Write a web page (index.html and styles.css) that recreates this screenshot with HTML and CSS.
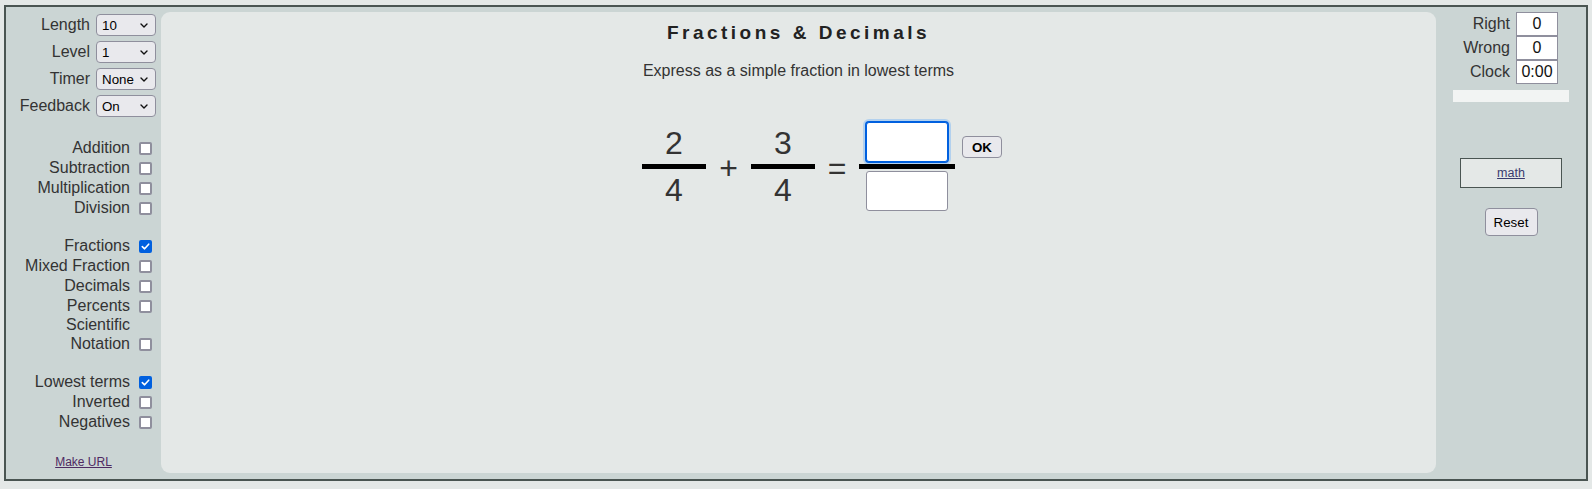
FILE: index.html
```html
<!DOCTYPE html>
<html lang="en">
<head>
<meta charset="utf-8">
<title>Fractions &amp; Decimals</title>
<link rel="stylesheet" href="styles.css">
</head>
<body>
<div class="frame">
  <aside class="left">
    <div class="settings">
      <label class="set-label">Length</label>
      <select class="sel"><option>10</option></select>
      <label class="set-label">Level</label>
      <select class="sel"><option>1</option></select>
      <label class="set-label">Timer</label>
      <select class="sel"><option>None</option></select>
      <label class="set-label">Feedback</label>
      <select class="sel"><option>On</option></select>
    </div>
    <div class="opts">
      <div class="group">
        <label class="opt"><span class="opt-text">Addition</span><input type="checkbox" class="cb"></label>
        <label class="opt"><span class="opt-text">Subtraction</span><input type="checkbox" class="cb"></label>
        <label class="opt"><span class="opt-text">Multiplication</span><input type="checkbox" class="cb"></label>
        <label class="opt"><span class="opt-text">Division</span><input type="checkbox" class="cb"></label>
      </div>
      <div class="group">
        <label class="opt"><span class="opt-text">Fractions</span><input type="checkbox" class="cb" checked></label>
        <label class="opt"><span class="opt-text">Mixed Fraction</span><input type="checkbox" class="cb"></label>
        <label class="opt"><span class="opt-text">Decimals</span><input type="checkbox" class="cb"></label>
        <label class="opt"><span class="opt-text">Percents</span><input type="checkbox" class="cb"></label>
        <div class="opt-wrap">Scientific</div>
        <label class="opt"><span class="opt-text">Notation</span><input type="checkbox" class="cb"></label>
      </div>
      <div class="group">
        <label class="opt"><span class="opt-text">Lowest terms</span><input type="checkbox" class="cb" checked></label>
        <label class="opt"><span class="opt-text">Inverted</span><input type="checkbox" class="cb"></label>
        <label class="opt"><span class="opt-text">Negatives</span><input type="checkbox" class="cb"></label>
      </div>
    </div>
    <div class="make-url"><a href="#">Make URL</a></div>
  </aside>

  <main class="panel">
    <h1 class="title">Fractions &amp; Decimals</h1>
    <p class="subtitle">Express as a simple fraction in lowest terms</p>
    <div class="equation-row">
      <div class="equation">
        <div class="frac">
          <div class="num">2</div>
          <div class="bar"></div>
          <div class="den">4</div>
        </div>
        <div class="op">+</div>
        <div class="frac">
          <div class="num">3</div>
          <div class="bar"></div>
          <div class="den">4</div>
        </div>
        <div class="op op-eq">=</div>
        <div class="frac answer">
          <input type="text" class="ans-in ans-top">
          <div class="bar"></div>
          <input type="text" class="ans-in ans-bottom">
        </div>
      </div>
      <button class="ok" type="button">OK</button>
    </div>
  </main>

  <aside class="right">
    <div class="stats">
      <span class="stat-label">Right</span><span class="stat-box">0</span>
      <span class="stat-label">Wrong</span><span class="stat-box">0</span>
      <span class="stat-label">Clock</span><span class="stat-box">0:00</span>
    </div>
    <div class="progress"></div>
    <div class="topic"><a href="#">math</a></div>
    <button class="reset" type="button">Reset</button>
  </aside>
</div>
</body>
</html>
```

FILE: styles.css
```css
* {
  box-sizing: border-box;
}

html,
body {
  margin: 0;
  padding: 0;
  background: #e4e8e7;
}

body {
  width: 1592px;
  height: 489px;
  overflow: hidden;
  font-family: "Liberation Sans", Arial, sans-serif;
  color: #333;
}

.frame {
  margin: 5px 0 0 4px;
  width: 1584px;
  height: 476px;
  border: 2px solid #4a5552;
  background: #cbd5d4;
  display: flex;
}

/* ---------- left sidebar ---------- */
.left {
  width: 155px;
  flex: none;
  padding-top: 7px;
  display: flex;
  flex-direction: column;
}

.settings {
  display: grid;
  grid-template-columns: 1fr 60px;
  column-gap: 6px;
  row-gap: 5px;
  padding-right: 5px;
  align-items: center;
}

.set-label {
  font-size: 16px;
  line-height: 22px;
  text-align: right;
}

.sel {
  -webkit-appearance: none;
  appearance: none;
  width: 60px;
  height: 22px;
  margin: 0;
  padding: 0 0 0 5px;
  border: 1px solid #8f8f9d;
  border-radius: 4px;
  background-color: #e9e9ed;
  background-image: url("data:image/svg+xml,%3Csvg xmlns='http://www.w3.org/2000/svg' viewBox='0 0 8 5'%3E%3Cpath d='M1 1 L4 4 L7 1' fill='none' stroke='%23111' stroke-width='1.4' stroke-linecap='round' stroke-linejoin='round'/%3E%3C/svg%3E");
  background-repeat: no-repeat;
  background-position: right 7px center;
  background-size: 8px 5px;
  font: 13.33px "Liberation Sans", Arial, sans-serif;
  color: #000;
}

.opts {
  margin-top: 21px;
}

.group + .group {
  margin-top: 18px;
}

.opt {
  display: flex;
  align-items: center;
  height: 20px;
  font-size: 16px;
  line-height: 20px;
}

.opt-text {
  flex: 1;
  text-align: right;
  white-space: nowrap;
}

.opt-wrap {
  font-size: 16px;
  line-height: 18px;
  text-align: right;
  padding-right: 31px;
}

.cb {
  -webkit-appearance: none;
  appearance: none;
  flex: none;
  width: 13px;
  height: 13px;
  margin: 0 9px;
  border: 2px solid #8f8f9d;
  border-radius: 2px;
  background: #fff;
}

.cb:checked {
  border-color: #0060df;
  background-color: #0060df;
  background-image: url("data:image/svg+xml,%3Csvg xmlns='http://www.w3.org/2000/svg' viewBox='0 0 9 9'%3E%3Cpath d='M1.3 4.6 L3.6 6.8 L7.7 2.2' fill='none' stroke='%23fff' stroke-width='1.6' stroke-linecap='round' stroke-linejoin='round'/%3E%3C/svg%3E");
  background-repeat: no-repeat;
  background-position: center;
  background-size: 9px 9px;
}

.make-url {
  margin-top: 23px;
  text-align: center;
  font-size: 12px;
}

.make-url a {
  color: #4e2a63;
}

/* ---------- main panel ---------- */
.panel {
  flex: none;
  width: 1275px;
  margin: 5px 0 6px;
  padding-top: 10px;
  background: #e4e8e7;
  border-radius: 9px;
  text-align: center;
}

.title {
  margin: 0;
  font-size: 19px;
  font-weight: bold;
  letter-spacing: 3.5px;
  color: #222;
  line-height: normal;
}

.subtitle {
  margin: 18px 0 0;
  font-size: 16px;
  color: #333;
  line-height: normal;
}

.equation-row {
  display: grid;
  grid-template-columns: 1fr auto 1fr;
  margin-top: 42px;
}

.equation {
  grid-column: 2;
  display: flex;
  align-items: center;
}

.frac {
  width: 64px;
  display: flex;
  flex-direction: column;
  align-items: center;
}

.frac.answer {
  width: 96px;
}

.num,
.den {
  font-size: 32px;
  line-height: 36px;
  color: #333;
}

.num {
  padding-bottom: 3px;
}

.den {
  padding-top: 3px;
}

.bar {
  align-self: stretch;
  height: 5px;
  background: #000;
}

.op {
  width: 45px;
  padding-top: 3px;
  font-size: 32px;
  line-height: 36px;
  color: #333;
}

.op-eq {
  width: 44px;
}

.ans-in {
  width: 82px;
  height: 40px;
  margin: 0;
  padding: 0 4px;
  border: 1px solid #8f8f9d;
  border-radius: 3px;
  background: #fff;
  font: 16px "Liberation Sans", Arial, sans-serif;
}

.ans-top {
  margin-bottom: 2px;
  border-color: #0060df;
  box-shadow: 0 0 0 1px #0060df, 0 0 0 3px #b3d1ee;
}

.ans-bottom {
  margin-top: 2px;
}

.ok {
  grid-column: 3;
  justify-self: start;
  align-self: start;
  width: 40px;
  height: 22px;
  margin: 14px 0 0 7px;
  padding: 0;
  border: 1px solid #8f8f9d;
  border-radius: 4px;
  background: #e9e9ed;
  font: bold 13.33px "Liberation Sans", Arial, sans-serif;
  color: #000;
}

/* ---------- right sidebar ---------- */
.right {
  width: 150px;
  flex: none;
  padding-top: 5px;
  display: flex;
  flex-direction: column;
  align-items: center;
}

.stats {
  align-self: stretch;
  display: grid;
  grid-template-columns: 1fr 42px;
  column-gap: 6px;
  padding-right: 28px;
}

.stat-label {
  font-size: 16px;
  line-height: 24px;
  text-align: right;
}

.stat-box {
  height: 24px;
  border: 1px solid #8f8f9d;
  background: #fff;
  font-size: 16px;
  line-height: 22px;
  text-align: center;
  color: #111;
}

.progress {
  width: 116px;
  height: 12px;
  margin-top: 6px;
  background: #f2f4f3;
}

.topic {
  width: 102px;
  height: 30px;
  margin-top: 56px;
  border: 1px solid #4a5552;
  background: #e4e8e7;
  display: flex;
  align-items: center;
  justify-content: center;
  font-size: 12.5px;
}

.topic a {
  color: #3a3a6e;
}

.reset {
  width: 53px;
  height: 28px;
  margin-top: 20px;
  padding: 0;
  border: 1px solid #8f8f9d;
  border-radius: 4px;
  background: #e9e9ed;
  font: 13.33px "Liberation Sans", Arial, sans-serif;
  color: #000;
}
```
